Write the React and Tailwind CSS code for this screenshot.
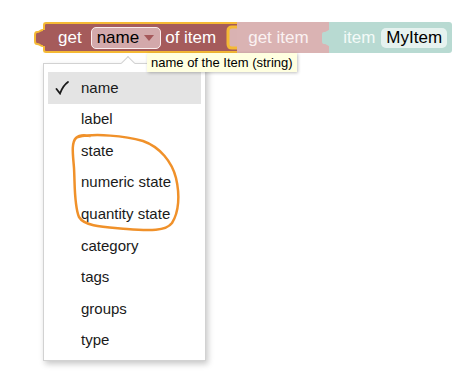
const items = [
  "name",
  "label",
  "state",
  "numeric state",
  "quantity state",
  "category",
  "tags",
  "groups",
  "type",
];

function OutputTab({ fill, stroke, className }) {
  return (
    <svg width="12" height="31" className={className}>
      <path
        d="M12 8 H9 C6 8 6 10 3 10 C1.5 10 1 11 1 13 V19 C1 21 1.5 22 3 22 C6 22 6 24 9 24 H12 Z"
        fill={fill}
      />
      {stroke && (
        <path
          d="M9 8 C6 8 6 10 3 10 C1.5 10 1 11 1 13 V19 C1 21 1.5 22 3 22 C6 22 6 24 9 24"
          fill="none"
          stroke={stroke}
          strokeWidth="2"
        />
      )}
    </svg>
  );
}

export default function App() {
  return (
    <div
      className="relative w-[474px] h-[387px] overflow-hidden bg-white"
      style={{ fontFamily: '"Liberation Sans", Arial, sans-serif' }}
    >
      {/* blocks row */}
      <div className="flex pt-[22px] pl-[43px]">
        {/* get <field> of item */}
        <div className="relative z-10">
          <OutputTab fill="#a55b5b" stroke="#f5b935" className="absolute left-[-9px] top-0" />
          <div className="flex h-[31px] items-center rounded-l-[3px] border-2 border-r-0 border-[#f5b935] bg-[#a55b5b] pl-[13px] text-[17px] text-white">
            <span>get</span>
            <div className="ml-[9px] flex h-[22px] items-center rounded-[5px] border-[1.5px] border-[#fbeeee] bg-[#d3a9ab] pl-[5px] pr-[6px] text-black">
              <span>name</span>
              <svg width="10" height="6" className="ml-[5px] mt-[1px]">
                <path d="M0 0 H10 L5 6 Z" fill="#a5585a" />
              </svg>
            </div>
            <span className="ml-[4px]">of item</span>
            <svg width="12" height="27" className="ml-[9px]">
              <path d="M12 3 H7 Q3 3 3 7 V20 Q3 24 7 24 H12 Z" fill="#d9b2b2" />
              <path d="M12 3 H7 Q3 3 3 7 V20 Q3 24 7 24 H12" fill="none" stroke="#f5b935" strokeWidth="3" />
            </svg>
          </div>
        </div>

        {/* get item */}
        <div className="flex h-[31px] w-[92px] items-center bg-[#dab3b3] pl-[11px] text-[17px] text-[#fbf2f2]">
          get item
        </div>

        {/* item MyItem */}
        <div className="relative">
          <OutputTab fill="#b8dad2" className="absolute left-[-8px] top-0" />
          <div className="flex h-[31px] w-[123px] items-center rounded-r-[3px] bg-[#b8dad2] pl-[14px] text-[17px] text-[#f3faf8]">
            <span>item</span>
            <div className="ml-[6px] flex h-[20px] items-center rounded-[5px] bg-[#e6f2ef] px-[5px] text-black">
              MyItem
            </div>
          </div>
        </div>
      </div>

      {/* dropdown menu */}
      <div className="absolute left-[43px] top-[63px] z-10 h-[298px] w-[163px] border border-[#d2d2d2] bg-white pt-[8px] shadow-[2px_3px_6px_rgba(0,0,0,0.22)]">
        <div className="absolute left-[79px] top-[-6px] h-[10px] w-[10px] rotate-45 border-l border-t border-[#d2d2d2] bg-white" />
        {items.map((item, i) => (
          <div
            key={item}
            className={
              "relative mx-[4px] flex h-[31.6px] items-center pl-[33px] text-[15px] text-[#1a1a1a] " +
              (i === 0 ? "bg-[#e4e4e4]" : "")
            }
          >
            {i === 0 && (
              <svg width="14" height="14" className="absolute left-[7px] top-[9px]">
                <path d="M1.5 8 L5 12.5 C7 7 9.5 3.5 13 1" fill="none" stroke="#1a1a1a" strokeWidth="1.8" strokeLinecap="round" />
              </svg>
            )}
            {item}
          </div>
        ))}
      </div>

      {/* tooltip */}
      <div className="absolute left-[147px] top-[53px] z-20 flex h-[19px] items-center bg-[#ffffe0] px-[4px] text-[13px] text-black shadow-[1px_1px_3px_rgba(0,0,0,0.25)]">
        name of the Item (string)
      </div>

      {/* hand drawn annotation */}
      <svg className="pointer-events-none absolute left-0 top-0 z-30" width="474" height="387">
        <path
          d="M78 137 C95 133 125 136 143 141 C160 147 172 162 176 178 C180 195 179 212 172 223 C166 231 150 231 127 229 C105 227 85 227 79 217 C74 205 75 185 74 168 C73 155 71 143 76 138 C80 134 86 135 90 136"
          fill="none"
          stroke="#f0912a"
          strokeWidth="2.5"
          strokeLinecap="round"
        />
      </svg>
    </div>
  );
}
